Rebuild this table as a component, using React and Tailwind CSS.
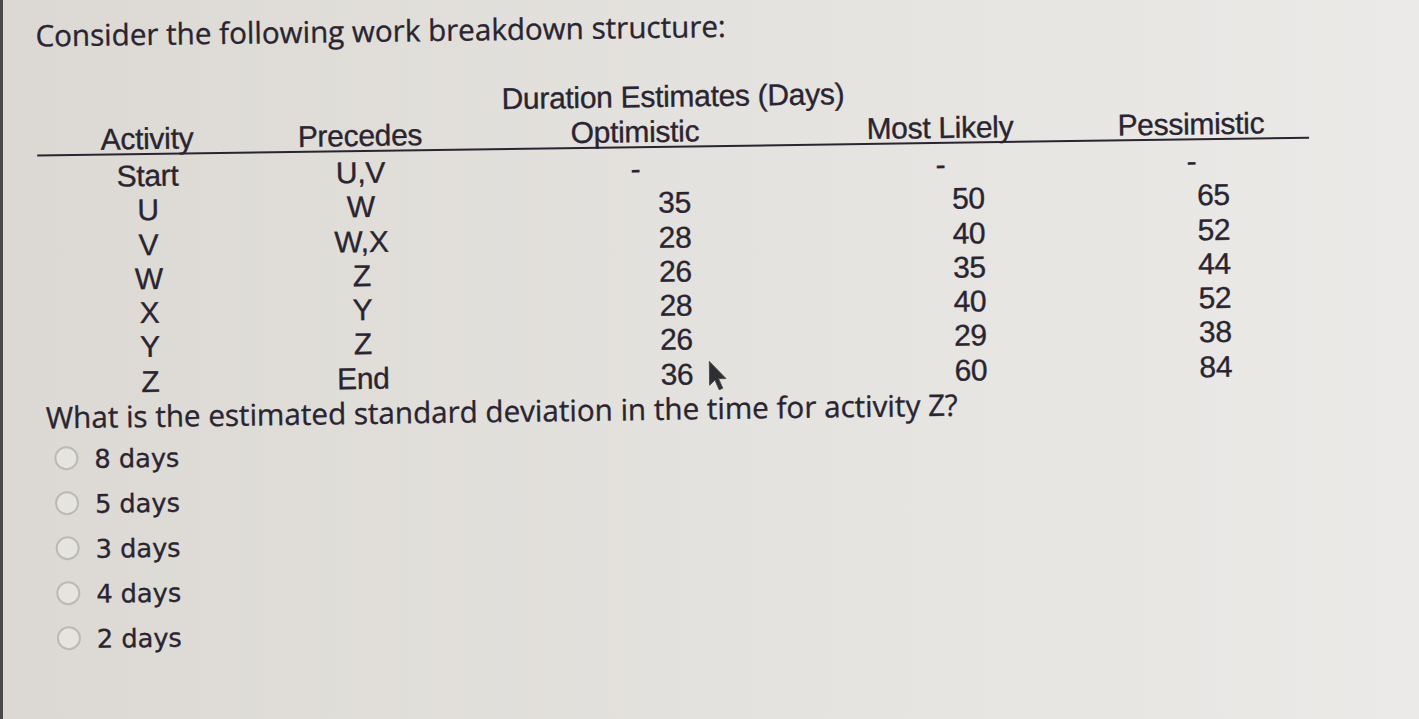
import React from 'react';

const rows = [
  ['Start', 'U,V', '-', '-', '-'],
  ['U', 'W', '35', '50', '65'],
  ['V', 'W,X', '28', '40', '52'],
  ['W', 'Z', '26', '35', '44'],
  ['X', 'Y', '28', '40', '52'],
  ['Y', 'Z', '26', '29', '38'],
  ['Z', 'End', '36', '60', '84'],
];

const answers = ['8 days', '5 days', '3 days', '4 days', '2 days'];

// right padding for the number columns (numbers sit right, dashes sit centred)
const numPad = ['pr-[117px]', 'pr-[89px]', 'pr-[80px]'];

function Cell({ value, idx }) {
  if (idx < 2) return <div className="text-center">{value}</div>;
  if (value === '-') return <div className="text-center">-</div>;
  return <div className={'text-right ' + numPad[idx - 2]}>{value}</div>;
}

function Cursor() {
  return (
    <svg className="absolute left-[700px] top-[370px]" width="19" height="31" viewBox="0 0 16 26">
      <path d="M1 1 L1 21 L5.5 16.8 L9 25 L12 23.7 L8.6 15.6 L14.8 15.6 Z" fill="#2f2f33" stroke="#4a4a4e" strokeWidth="0.8" strokeLinejoin="round" />
    </svg>
  );
}

export default function App() {
  return (
    <div className="w-[1419px] h-[719px] overflow-hidden flex border-l-[3px] border-[#4b4a4a] bg-linear-to-r from-[#dcd9d4] via-[#e4e2de] to-[#ebeae8] text-[#2a2430] [-webkit-text-stroke:0.35px_#2a2430]">
      <div className="relative flex-1 -rotate-[0.8deg] origin-top-left">
        <h1 className="pt-[17px] pl-[32px] text-[29.6px] leading-[38px] font-normal" style={{ fontFamily: '"Open Sans", sans-serif' }}>
          Consider the following work breakdown structure:
        </h1>

        <div className="ml-[32px] mt-[34px] text-[30px] tracking-[-0.3px]" style={{ fontFamily: '"Liberation Sans", Arial, sans-serif' }}>
          <div className="ml-[429px] w-[415px] text-center leading-[34px]">Duration Estimates (Days)</div>
          <div className="mt-[3px] w-[1272px] grid grid-cols-[220px_206px_344px_266px_236px] leading-[29px] border-b-2 border-[#2a2430]">
            <div className="text-center">Activity</div>
            <div className="text-center">Precedes</div>
            <div className="text-center">Optimistic</div>
            <div className="text-center">Most Likely</div>
            <div className="text-center">Pessimistic</div>
          </div>
          <div className="mt-[4px] grid grid-cols-[220px_206px_344px_266px_236px] leading-[34.3px]">
            {rows.map((r, i) => (
              <React.Fragment key={i}>
                {r.map((v, j) => (
                  <Cell key={j} value={v} idx={j} />
                ))}
              </React.Fragment>
            ))}
          </div>
        </div>

        <p className="mt-[3px] pl-[37px] text-[29.6px] leading-[27px]" style={{ fontFamily: '"Open Sans", sans-serif' }}>
          What is the estimated standard deviation in the time for activity Z?
        </p>

        <div className="mt-[7px] flex flex-col" style={{ fontFamily: '"DejaVu Sans", Verdana, sans-serif' }}>
          {answers.map((a) => (
            <label key={a} className="h-[45px] flex items-center gap-[16px] pl-[45px] text-[25.6px]">
              <span className="-mt-[3px] w-[24px] h-[24px] rounded-full border-2 border-[#bdbab5] bg-[#e6e4e1] [-webkit-text-stroke:0]"></span>
              <span>{a}</span>
            </label>
          ))}
        </div>

        <Cursor />
      </div>
    </div>
  );
}
